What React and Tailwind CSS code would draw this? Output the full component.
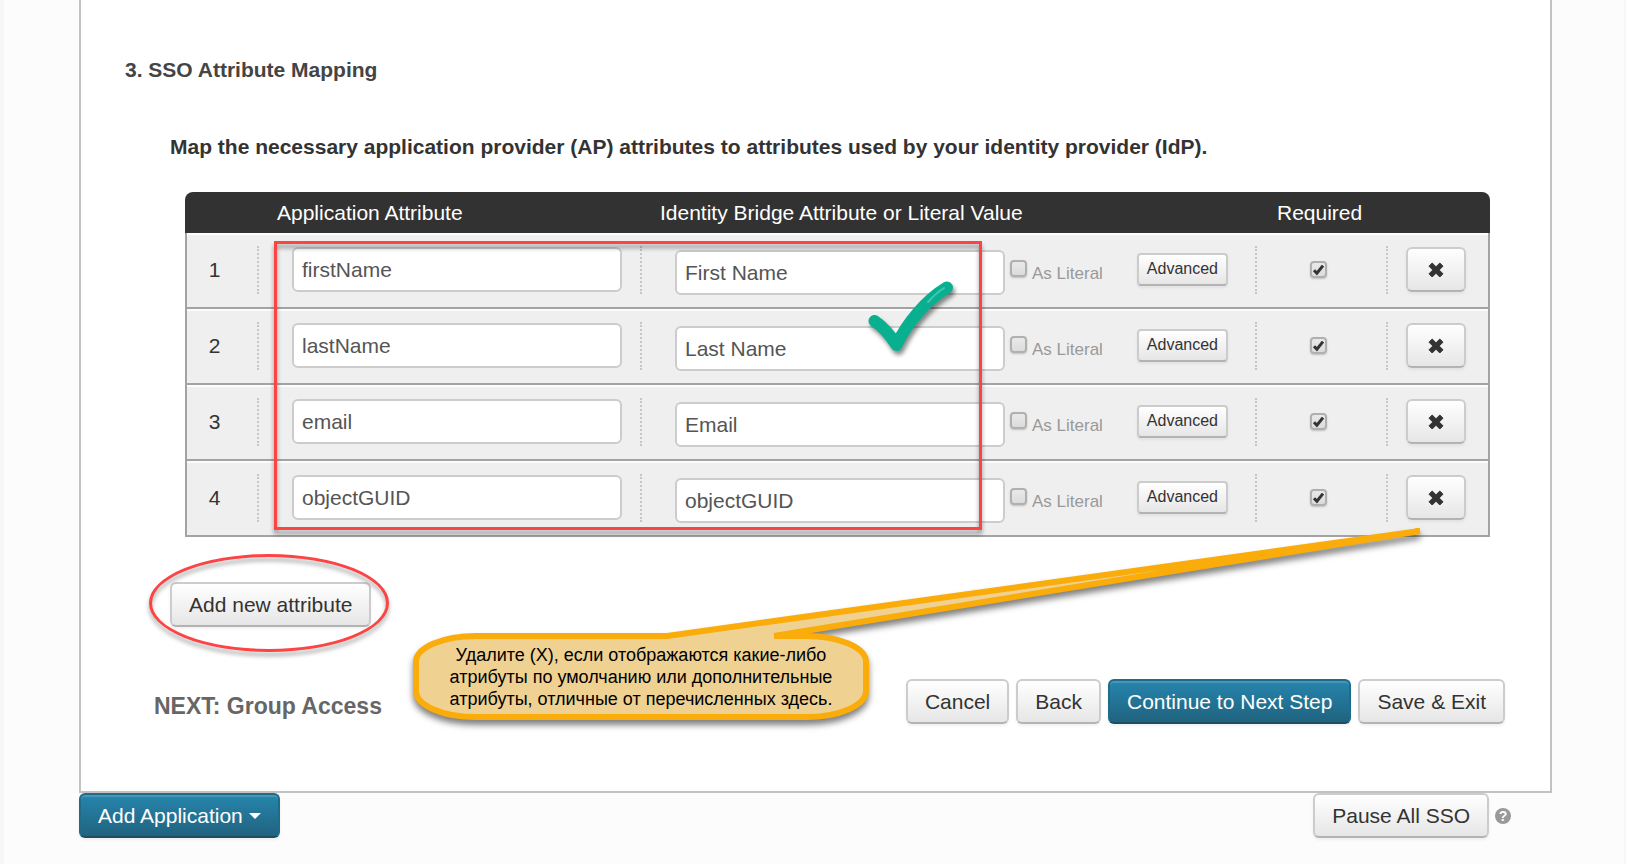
import clsx from "clsx";

const attributes = [
  { app: "firstName", bridge: "First Name" },
  { app: "lastName", bridge: "Last Name" },
  { app: "email", bridge: "Email" },
  { app: "objectGUID", bridge: "objectGUID" },
];

const buttonStyles = {
  light:
    "border-[#cccccc] border-b-[#b3b3b3] bg-linear-to-b from-white to-[#e6e6e6] text-[#333333] shadow-[0_2px_3px_rgba(0,0,0,0.06)]",
  primary:
    "border-[#1f6b8a] border-b-[#1b4f66] bg-linear-to-b from-[#2685ad] to-[#20637f] text-white shadow-[inset_0_2px_0_rgba(255,255,255,0.15),0_2px_3px_rgba(0,0,0,0.06)]",
};

const buttonSizes = {
  normal: "h-[45px] px-[17px] text-[21px] rounded-md",
  small: "h-[33px] px-2 pb-0.5 text-base rounded",
  icon: "h-[45px] w-15 rounded-md",
};

function Button({ variant = "light", size = "normal", className, children, ...props }) {
  return (
    <button
      type="button"
      className={clsx(
        "flex shrink-0 items-center justify-center border-2 whitespace-nowrap",
        buttonStyles[variant],
        buttonSizes[size],
        className
      )}
      {...props}
    >
      {children}
    </button>
  );
}

function TextField({ className, ...props }) {
  return (
    <input
      type="text"
      className={clsx(
        "h-[45px] w-[330px] min-w-0 rounded-md border-2 border-[#cccccc] bg-white px-2 text-[21px] text-[#555555] outline-none",
        className
      )}
      {...props}
    />
  );
}

function Checkbox({ className, ...props }) {
  return (
    <span className={clsx("grid size-[17px] shrink-0", className)}>
      <input
        type="checkbox"
        className="peer col-start-1 row-start-1 size-[17px] appearance-none rounded border-2 border-[#b0b0b0] bg-linear-to-b from-[#e9e9e9] to-[#dcdcdc] shadow-[0_1px_2px_rgba(0,0,0,0.2)]"
        {...props}
      />
      <svg
        viewBox="0 0 17 17"
        className="pointer-events-none invisible col-start-1 row-start-1 size-[17px] peer-checked:visible"
        aria-hidden="true"
      >
        <path d="M4 9.2 6.9 12.2 13 4.6" fill="none" stroke="#333333" strokeWidth="3" />
      </svg>
    </span>
  );
}

function Divider() {
  return <span className="h-12 shrink-0 border-l-2 border-dotted border-[#c6c6c6]" />;
}

function RemoveIcon() {
  return (
    <svg viewBox="0 0 16 16" className="size-4" aria-hidden="true">
      <path
        d="M4.2 1 8 4.800 11.8 1 15 4.200 11.2 8 15 11.8 11.8 15 8 11.2 4.200 15 1 11.8 4.800 8 1 4.200Z"
        fill="#333333"
        stroke="#333333"
        strokeWidth="1"
        strokeLinejoin="round"
      />
    </svg>
  );
}

function AttributeRow({ index, app, bridge }) {
  const cell =
    "border-b-2 border-[#a3a3a3] bg-[#efefef] p-0 shadow-[inset_0_2px_0_#fcfcfc] first:border-l-2 last:border-r-2";
  const content = "flex h-[74px] items-center pb-px";

  return (
    <tr>
      <td className={cell}>
        <div className={clsx(content, "justify-between")}>
          <span className="w-[55px] text-center">{index}</span>
          <Divider />
        </div>
      </td>
      <td className={cell}>
        <div className={clsx(content, "justify-between pl-[33px]")}>
          <TextField defaultValue={app} aria-label={`Application attribute ${index}`} />
          <Divider />
        </div>
      </td>
      <td className={cell}>
        <div className={clsx(content, "pl-[33px]")}>
          <TextField
            className="mt-1.5"
            defaultValue={bridge}
            aria-label={`Identity bridge attribute ${index}`}
          />
          <label className="ml-[5px] flex items-center gap-[5px] text-[17px] whitespace-nowrap text-[#999999]">
            <Checkbox className="mb-0.5" />
            <span className="pt-2">As Literal</span>
          </label>
          <div className="ml-auto flex items-center gap-[27px]">
            <Button size="small">Advanced</Button>
            <Divider />
          </div>
        </div>
      </td>
      <td className={cell}>
        <div className={clsx(content, "justify-between pl-[53px]")}>
          <Checkbox defaultChecked aria-label={`Attribute ${index} required`} />
          <Divider />
        </div>
      </td>
      <td className={cell}>
        <div className={clsx(content, "pl-[18px]")}>
          <Button size="icon" aria-label={`Remove attribute ${index}`}>
            <RemoveIcon />
          </Button>
        </div>
      </td>
    </tr>
  );
}

function AttributeTable() {
  return (
    <div className="relative">
      <table className="w-full table-fixed border-separate border-spacing-0">
        <colgroup>
          <col className="w-[74px]" />
          <col className="w-[383px]" />
          <col />
          <col className="w-[131px]" />
          <col className="w-[102px]" />
        </colgroup>
        <thead>
          <tr className="h-[41px] text-left text-white *:bg-[#323232] *:py-0 *:font-normal">
            <th className="rounded-tl-lg" />
            <th className="pl-[18px]">Application Attribute</th>
            <th className="pl-[18px]">Identity Bridge Attribute or Literal Value</th>
            <th className="pl-5">Required</th>
            <th className="rounded-tr-lg" />
          </tr>
        </thead>
        <tbody>
          {attributes.map((item, i) => (
            <AttributeRow key={item.app} index={i + 1} {...item} />
          ))}
        </tbody>
      </table>

      {/* highlight around the two value columns */}
      <div className="pointer-events-none absolute top-[49px] bottom-[7px] left-[89px] w-[708px] border-3 border-[#fd4444] drop-shadow-[0_4px_2px_rgba(0,0,0,0.4)]" />
      <svg
        viewBox="0 0 100 80"
        className="pointer-events-none absolute top-[83px] left-[675px] h-20 w-[100px] drop-shadow-[2px_4px_2px_rgba(0,0,0,0.45)]"
        aria-hidden="true"
      >
        <path
          d="M14.500 46C22 51 30 60 36.500 70C47 48 66 25 87 12.500"
          fill="none"
          stroke="#08b090"
          strokeWidth="12"
          strokeLinecap="round"
          strokeLinejoin="round"
        />
        <path
          d="M68 27Q76 18 84 13"
          fill="none"
          stroke="#3fc9ae"
          strokeWidth="2"
          strokeLinecap="round"
        />
      </svg>
    </div>
  );
}

function Callout() {
  return (
    <div className="pointer-events-none absolute top-[515px] left-[322px] h-[220px] w-[1020px]">
      <svg
        viewBox="0 0 1020 220"
        className="absolute inset-0 size-full overflow-visible drop-shadow-[0_5px_3px_rgba(0,0,0,0.5)]"
        aria-hidden="true"
      >
        <path
          d="M371 121H403A60 26 0 0 1 463 147V176A60 26 0 0 1 403 202H73A60 26 0 0 1 13 176V147A60 26 0 0 1 73 121H264L1017 16Z"
          fill="#efd192"
        />
        <path
          d="M371 121H403A60 26 0 0 1 463 147V176A60 26 0 0 1 403 202H73A60 26 0 0 1 13 176V147A60 26 0 0 1 73 121H264L1017 16L371 121"
          fill="none"
          stroke="#faac0a"
          strokeWidth="6"
          strokeLinejoin="bevel"
        />
      </svg>
      <p className="relative ml-2.5 w-[456px] pt-[129px] text-center text-lg/[22px] text-black">
        Удалите (X), если отображаются какие-либо
        <br />
        атрибуты по умолчанию или дополнительные
        <br />
        атрибуты, отличные от перечисленных здесь.
      </p>
    </div>
  );
}

export default function App() {
  return (
    <div className="min-h-screen border-r-2 border-l-4 border-[#f7f7f7] bg-[#fcfcfc] pr-[72px] pl-[75px] font-['Liberation_Sans',Arial,sans-serif] text-[21px] text-[#333333]">
      <main className="relative border-2 border-t-0 border-[#c2c2c2] bg-white pt-[54px] pb-[67px]">
        <h2 className="pl-11 leading-8 font-bold text-[#444444]">3. SSO Attribute Mapping</h2>
        <p className="mt-[45px] pl-[89px] leading-8 font-bold">
          Map the necessary application provider (AP) attributes to attributes used by your identity
          provider (IdP).
        </p>

        <div className="mt-[29px] mr-15 ml-[104px]">
          <AttributeTable />
        </div>

        <div className="relative mt-[45px] ml-[89px] w-fit">
          <Button>Add new attribute</Button>
          <div className="pointer-events-none absolute -top-7 -right-[18px] -bottom-[25px] -left-[21px] rounded-[50%] border-3 border-[#fd4444] drop-shadow-[0_4px_2px_rgba(0,0,0,0.35)]" />
        </div>

        <div className="mt-[52px] mr-[45px] ml-[73px] flex items-center justify-between">
          <h3 className="pt-2.5 text-[23px] font-bold text-[#666666]">NEXT: Group Access</h3>
          <div className="flex gap-[7px]">
            <Button>Cancel</Button>
            <Button>Back</Button>
            <Button variant="primary">Continue to Next Step</Button>
            <Button>Save &amp; Exit</Button>
          </div>
        </div>

        <Callout />
      </main>

      <div className="flex items-center justify-between">
        <Button variant="primary" className="gap-1.5">
          Add Application
          <span className="border-x-6 border-t-6 border-x-transparent border-t-white" />
        </Button>
        <div className="mr-[41px] flex items-center gap-1.5">
          <Button>Pause All SSO</Button>
          <button
            type="button"
            aria-label="Help"
            className="flex size-4 items-center justify-center rounded-full bg-[#999999] text-sm/4 font-bold text-white"
          >
            ?
          </button>
        </div>
      </div>
    </div>
  );
}
